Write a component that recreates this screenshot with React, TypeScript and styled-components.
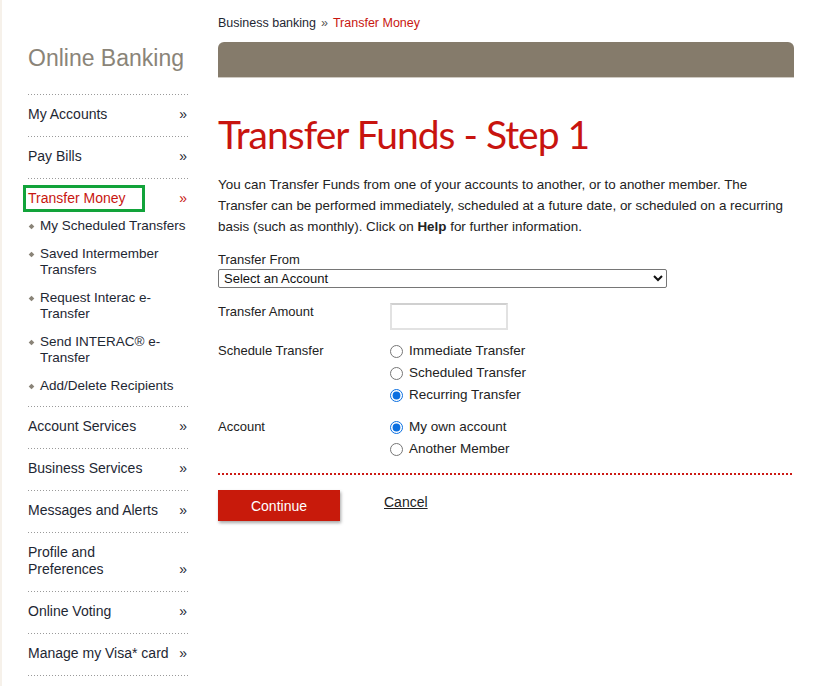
import React, { useState } from "react";
import styled, { createGlobalStyle } from "styled-components";

const GlobalStyle = createGlobalStyle`
    html, body {
        margin: 0;
        padding: 0;
        background: #fff;
    }
    body {
        font-family: "Liberation Sans", Arial, sans-serif;
        color: #222;
    }
`;

const Page = styled.div`
    display: flex;
    flex-direction: row;
    gap: 30px;
    padding-left: 26px;
    border-left: 2px solid #f6f1ea;
    min-height: 686px;
    box-sizing: border-box;
`;

const Sidebar = styled.nav`
    width: 160px;
    flex-shrink: 0;
    padding-top: 44px;
`;

const SideTitle = styled.h2`
    margin: 0 0 22px;
    font-size: 23px;
    line-height: 28px;
    font-weight: 400;
    color: #8a8478;
`;

const DotRule = styled.div`
    height: 1px;
    background-image: repeating-linear-gradient(to right, #9a9a9a 0 1px, transparent 1px 3px);
`;

const MenuRow = styled.a<{ $active?: boolean }>`
    display: flex;
    align-items: flex-end;
    justify-content: space-between;
    padding: 11px 0 13px;
    font-size: 14px;
    line-height: 17px;
    color: ${(props) => props.$active ? '#c8160f' : '#1e2733'};
    text-decoration: none;
    cursor: pointer;
`;

const MenuLabel = styled.span<{ $boxed?: boolean }>`
    ${(props) => props.$boxed ? `
        outline: 3px solid #12a33a;
        outline-offset: 2px;
        padding-right: 14px;
    ` : ''}
`;

const Chevron = styled.span<{ $active?: boolean }>`
    font-size: 14px;
    color: ${(props) => props.$active ? '#c8160f' : '#1e2733'};
    padding-right: 1px;
`;

const SubList = styled.ul`
    list-style: none;
    margin: -2px 0 0;
    padding: 0 0 12px;
    display: flex;
    flex-direction: column;
    gap: 12px;
`;

const SubItem = styled.li`
    display: flex;
    gap: 6px;
    font-size: 13.5px;
    line-height: 16px;
    color: #1e2733;
`;

const Bullet = styled.span`
    flex-shrink: 0;
    width: 5px;
    height: 5px;
    margin: 6px 0 0 1px;
    background: #8a8478;
    transform: rotate(45deg) scale(0.8);
`;

const Main = styled.main`
    width: 576px;
    padding-top: 16px;
`;

const Breadcrumb = styled.div`
    font-size: 12.5px;
    line-height: 14px;
    color: #1e2733;
    margin-bottom: 12px;

    span { margin: 0 5px; color: #555; }
`;

const CrumbCurrent = styled.a`
    color: #c8160f;
`;

const Banner = styled.div`
    height: 35px;
    background: #857b6b;
    border-radius: 6px 6px 0 0;
    border-bottom: 1px solid #cfcac2;
`;

const PageTitle = styled.h1`
    margin: 32px 0 16px;
    font-family: Lato, "Open Sans", sans-serif;
    font-weight: 400;
    font-size: 39px;
    letter-spacing: -1px;
    color: #c8140f;
    line-height: 48px;
`;

const Intro = styled.p`
    margin: 0 0 15px;
    font-size: 13.4px;
    line-height: 21px;
    color: #222;
`;

const FieldStack = styled.div`
    display: flex;
    flex-direction: column;
    margin-bottom: 13px;
`;

const FieldLabel = styled.label`
    font-size: 13px;
    line-height: 16px;
    color: #222;
`;

const AccountSelect = styled.select`
    width: 449px;
    height: 19px;
    margin-top: 1px;
    font-family: "Liberation Sans", Arial, sans-serif;
    font-size: 13px;
    color: #111;
    border: 1px solid #767676;
    border-radius: 2px;
    padding: 0 1px;
    background: #fff;
`;

const FormGrid = styled.div`
    display: grid;
    grid-template-columns: 172px 1fr;
    row-gap: 10px;
    align-items: start;
`;

const GridLabel = styled.div`
    font-size: 13px;
    line-height: 22px;
    color: #222;
`;

const AmountInput = styled.input`
    display: block;
    width: 114px;
    height: 23px;
    margin-top: 2px;
    box-sizing: content-box;
    padding: 0;
    border: 2px solid #e2e2e2;
    border-top-color: #d0d0d0;
`;

const RadioGroup = styled.div`
    display: flex;
    flex-direction: column;
`;

const RadioRow = styled.label`
    display: flex;
    align-items: center;
    gap: 6px;
    font-size: 13.5px;
    line-height: 22px;
    color: #222;

    input {
        margin: 0;
        width: 13px;
        height: 13px;
        accent-color: #0b6fe0;
    }
`;

const RedRule = styled.div`
    height: 2px;
    margin: 13px 0 15px;
    background-image: repeating-linear-gradient(to right, #cc1a14 0 2px, transparent 2px 4px);
`;

const Actions = styled.div`
    display: flex;
    align-items: flex-start;
    gap: 44px;
`;

const ContinueButton = styled.button`
    width: 122px;
    height: 31px;
    border: none;
    background: #c81a0b;
    color: #fff;
    font-family: "Liberation Sans", Arial, sans-serif;
    font-size: 14px;
    box-shadow: 1px 2px 3px rgba(0, 0, 0, 0.35);
    cursor: pointer;
`;

const CancelLink = styled.a`
    font-size: 14px;
    color: #222;
    text-decoration: underline;
    margin-top: 4px;
    cursor: pointer;
`;

type MenuEntry = { label: React.ReactNode; active?: boolean; subs?: string[][] };

const menu: MenuEntry[] = [
    { label: "My Accounts" },
    { label: "Pay Bills" },
    {
        label: "Transfer Money",
        active: true,
        subs: [
            ["My Scheduled Transfers"],
            ["Saved Intermember", "Transfers"],
            ["Request Interac e-", "Transfer"],
            ["Send INTERAC® e-", "Transfer"],
            ["Add/Delete Recipients"],
        ],
    },
    { label: "Account Services" },
    { label: "Business Services" },
    { label: "Messages and Alerts" },
    { label: <>Profile and<br />Preferences</> },
    { label: "Online Voting" },
    { label: "Manage my Visa* card" },
];

const App: React.FC = () => {
    const [schedule, setSchedule] = useState("recurring");
    const [account, setAccount] = useState("own");

    return (
        <>
            <GlobalStyle />
            <Page>
                <Sidebar>
                    <SideTitle>Online Banking</SideTitle>
                    <DotRule />
                    {menu.map((item, i) => (
                        <React.Fragment key={i}>
                            <MenuRow $active={item.active}>
                                <MenuLabel $boxed={item.active}>{item.label}</MenuLabel>
                                <Chevron $active={item.active}>»</Chevron>
                            </MenuRow>
                            {item.subs && (
                                <SubList>
                                    {item.subs.map((lines, j) => (
                                        <SubItem key={j}>
                                            <Bullet />
                                            <span>
                                                {lines.map((line, k) => (
                                                    <React.Fragment key={k}>
                                                        {k > 0 && <br />}
                                                        {line}
                                                    </React.Fragment>
                                                ))}
                                            </span>
                                        </SubItem>
                                    ))}
                                </SubList>
                            )}
                            <DotRule />
                        </React.Fragment>
                    ))}
                </Sidebar>

                <Main>
                    <Breadcrumb>
                        Business banking<span>»</span><CrumbCurrent>Transfer Money</CrumbCurrent>
                    </Breadcrumb>
                    <Banner />
                    <PageTitle>Transfer Funds - Step 1</PageTitle>
                    <Intro>
                        You can Transfer Funds from one of your accounts to another, or to another member. The
                        Transfer can be performed immediately, scheduled at a future date, or scheduled on a recurring
                        basis (such as monthly). Click on <strong>Help</strong> for further information.
                    </Intro>

                    <FieldStack>
                        <FieldLabel htmlFor="from">Transfer From</FieldLabel>
                        <AccountSelect id="from" defaultValue="">
                            <option value="">Select an Account</option>
                        </AccountSelect>
                    </FieldStack>

                    <FormGrid>
                        <GridLabel>Transfer Amount</GridLabel>
                        <div><AmountInput type="text" /></div>

                        <GridLabel>Schedule Transfer</GridLabel>
                        <RadioGroup>
                            <RadioRow>
                                <input type="radio" name="schedule" checked={schedule === "immediate"} onChange={() => setSchedule("immediate")} />
                                Immediate Transfer
                            </RadioRow>
                            <RadioRow>
                                <input type="radio" name="schedule" checked={schedule === "scheduled"} onChange={() => setSchedule("scheduled")} />
                                Scheduled Transfer
                            </RadioRow>
                            <RadioRow>
                                <input type="radio" name="schedule" checked={schedule === "recurring"} onChange={() => setSchedule("recurring")} />
                                Recurring Transfer
                            </RadioRow>
                        </RadioGroup>

                        <GridLabel>Account</GridLabel>
                        <RadioGroup>
                            <RadioRow>
                                <input type="radio" name="account" checked={account === "own"} onChange={() => setAccount("own")} />
                                My own account
                            </RadioRow>
                            <RadioRow>
                                <input type="radio" name="account" checked={account === "member"} onChange={() => setAccount("member")} />
                                Another Member
                            </RadioRow>
                        </RadioGroup>
                    </FormGrid>

                    <RedRule />

                    <Actions>
                        <ContinueButton>Continue</ContinueButton>
                        <CancelLink>Cancel</CancelLink>
                    </Actions>
                </Main>
            </Page>
        </>
    );
};

export default App;
